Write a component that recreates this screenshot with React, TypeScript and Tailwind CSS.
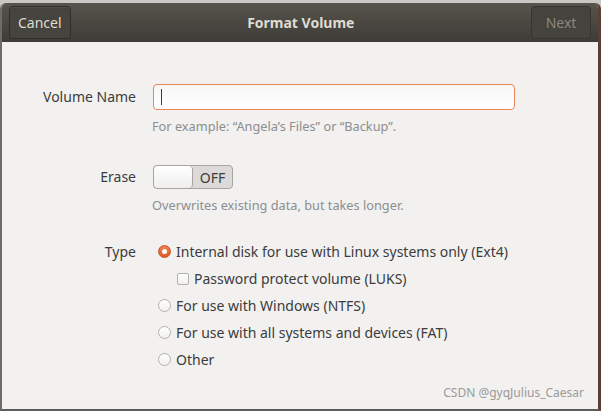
import React from "react";

const font = { fontFamily: '"Noto Sans", "Open Sans", sans-serif' };

function Radio({ checked }: { checked?: boolean }) {
  if (checked) {
    return (
      <span className="w-[13px] h-[13px] rounded-full bg-gradient-to-b from-[#f08050] to-[#e05a26] border border-[#c9501f] flex items-center justify-center shrink-0">
        <span className="w-[5px] h-[5px] rounded-full bg-white" />
      </span>
    );
  }
  return <span className="w-[13px] h-[13px] rounded-full bg-gradient-to-b from-white to-[#f1f0ef] border border-[#b4b1ad] shrink-0" />;
}

function Option({ label, checked }: { label: string; checked?: boolean }) {
  return (
    <div className="flex items-center gap-[5px] h-[27px]">
      <Radio checked={checked} />
      <span>{label}</span>
    </div>
  );
}

export default function App() {
  return (
    <div className="w-[601px] h-[411px] bg-[#c9c8c5] pt-[3px] overflow-hidden" style={font}>
      <div className="h-[408px] flex flex-col rounded-t-[6px] overflow-hidden border-l-2 border-l-[#6e6c69] border-r-[3px] border-r-[#5a3f36] border-b-2 border-b-[#5d5c5a]">
        {/* header bar */}
        <div className="h-[39px] shrink-0 bg-gradient-to-b from-[#57544c] to-[#3e3c37] flex items-center justify-between px-[7px]">
          <button className="h-[33px] px-[8px] rounded-[4px] border border-[#2f2e2a] bg-[#46443e] text-[#dfdbd2] text-[14px] shadow-[inset_0_1px_0_rgba(255,255,255,0.06)]">
            Cancel
          </button>
          <span className="text-[#dfdbd2] text-[14px] font-bold">Format Volume</span>
          <button className="h-[33px] w-[60px] rounded-[4px] border border-[#37352f] bg-[#45433d] text-[#8a877f] text-[14px]">
            Next
          </button>
        </div>

        {/* body */}
        <div className="flex-1 bg-[#f2f1f0] text-[#3c3c3c] text-[14px] relative">
          <div className="grid grid-cols-[134px_1fr] gap-x-[17px] pt-[42px]">
            <div className="text-right h-[26px] leading-[26px]">Volume Name</div>
            <div>
              <div className="w-[362px] h-[26px] rounded-[4px] border border-[#e9845e] bg-gradient-to-b from-[#f7f7f6] to-white flex items-center px-[7px]">
                <span className="w-px h-[16px] bg-[#3c3c3c]" />
              </div>
              <div className="text-[12.75px] text-[#8c8e8f] mt-[7px] -ml-px">
                For example: “Angela’s Files” or “Backup”.
              </div>
            </div>

            <div className="text-right h-[24px] leading-[24px] mt-[29px]">Erase</div>
            <div className="mt-[29px]">
              <div className="w-[80px] h-[24px] rounded-[4px] border border-[#a8a5a1] bg-[#dcdad8] flex overflow-hidden">
                <span className="w-[39px] h-full rounded-[4px] border-r border-[#a8a5a1] bg-gradient-to-b from-white to-[#efeeed]" />
                <span className="flex-1 flex items-center justify-center text-[#3c3c3c] text-[14px]">OFF</span>
              </div>
              <div className="text-[12.75px] text-[#8c8e8f] mt-[7px] -ml-px">
                Overwrites existing data, but takes longer.
              </div>
            </div>

            <div className="text-right h-[27px] leading-[27px] mt-[23px]">Type</div>
            <div className="mt-[23px] pl-[5px]">
              <Option label="Internal disk for use with Linux systems only (Ext4)" checked />
              <div className="flex items-center gap-[5px] h-[27px] pl-[19px]">
                <span className="w-[12px] h-[12px] rounded-[2px] border border-[#b4b1ad] bg-gradient-to-b from-white to-[#f1f0ef] shrink-0" />
                <span>Password protect volume (LUKS)</span>
              </div>
              <Option label="For use with Windows (NTFS)" />
              <Option label="For use with all systems and devices (FAT)" />
              <Option label="Other" />
            </div>
          </div>
          <div className="absolute right-[14px] bottom-[7px] text-[12px] text-[#9a9a9a]">CSDN @gyqJulius_Caesar</div>
        </div>
      </div>
    </div>
  );
}
